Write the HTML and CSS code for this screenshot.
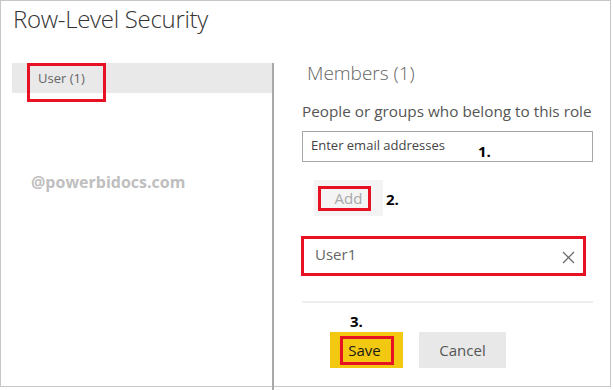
FILE: index.html
```html
<!DOCTYPE html>
<html>
<head>
<meta charset="utf-8">
<link rel="stylesheet" href="styles.css">
</head>
<body>
<div class="frame">
  <h1 class="title">Row-Level Security</h1>
  <div class="main">
    <div class="left">
      <div class="role-row">
        <span class="role-name">User (1)</span>
        <span class="mark mark-role"></span>
      </div>
      <div class="watermark">@powerbidocs.com</div>
    </div>
    <div class="divider"></div>
    <div class="right">
      <div class="members">Members (1)</div>
      <div class="label">People or groups who belong to this role</div>
      <div class="input">
        <span class="placeholder">Enter email addresses</span>
        <span class="step step-1">1.</span>
      </div>
      <div class="add-row">
        <div class="btn-add">Add<span class="mark mark-add"></span></div>
        <span class="step step-2">2.</span>
      </div>
      <div class="member-item">
        <span class="member-name">User1</span>
        <svg class="close" width="13" height="13" viewBox="0 0 13 13"><path d="M1 1L12 12M12 1L1 12" stroke="#6b6b6b" stroke-width="1.3" fill="none"/></svg>
      </div>
      <div class="sep"></div>
      <div class="actions">
        <span class="step step-3">3.</span>
        <div class="btn btn-save">Save<span class="mark mark-save"></span></div>
        <div class="btn btn-cancel">Cancel</div>
      </div>
    </div>
  </div>
</div>
</body>
</html>
```

FILE: styles.css
```css
html, body {
  margin: 0;
  padding: 0;
  background: #ffffff;
}
body {
  font-family: "Open Sans", "Noto Sans", sans-serif;
  width: 613px;
  height: 390px;
  overflow: hidden;
}
.frame {
  box-sizing: border-box;
  width: 611px;
  height: 387px;
  border: 1px solid #c6c6c6;
  display: flex;
  flex-direction: column;
}
.title {
  margin: 0;
  padding: 0 0 0 12px;
  height: 62px;
  font-size: 24px;
  line-height: 36px;
  font-weight: 300;
  color: #333333;
  letter-spacing: -0.3px;
}
.main {
  flex: 1;
  display: grid;
  grid-template-columns: 260px 2px 1fr;
  padding-left: 11px;
}
.left {
  display: flex;
  flex-direction: column;
}
.role-row {
  position: relative;
  height: 30px;
  background: #e9e9e9;
  display: flex;
  align-items: center;
  padding-left: 26px;
}
.role-name {
  font-size: 13px;
  color: #666666;
}
.mark {
  position: absolute;
  border: 3px solid #e81123;
  box-sizing: border-box;
}
.mark-role {
  left: 15px;
  top: 0;
  width: 79px;
  height: 39px;
}
.watermark {
  margin-top: 78px;
  padding-left: 19px;
  font-size: 16px;
  font-weight: 700;
  color: #bfbfbf;
  letter-spacing: 0;
}
.divider {
  background: #a9a9a9;
  margin-bottom: -4px;
}
.right {
  padding: 0 17px 0 28px;
  display: flex;
  flex-direction: column;
}
.members {
  font-size: 19px;
  font-weight: 300;
  color: #666666;
  line-height: 24px;
  padding-left: 5px;
  margin-top: -2px;
}
.label {
  margin-top: 16px;
  font-size: 15.3px;
  color: #555555;
  line-height: 20px;
  letter-spacing: 0;
  white-space: nowrap;
}
.input {
  position: relative;
  margin-top: 10px;
  height: 31px;
  box-sizing: border-box;
  border: 1px solid #a6a6a6;
  display: flex;
  align-items: center;
  padding-left: 8px;
}
.placeholder {
  font-size: 13px;
  color: #444444;
  margin-top: -4px;
}
.step {
  position: absolute;
  font-size: 15px;
  font-weight: 700;
  color: #000000;
  line-height: 18px;
}
.step-1 {
  left: 175px;
  top: 10px;
}
.add-row {
  position: relative;
  margin-top: 18px;
  padding-left: 12px;
  display: flex;
}
.btn-add {
  position: relative;
  width: 69px;
  height: 36px;
  background: #f4f4f4;
  color: #a8a8a8;
  font-size: 15px;
  display: flex;
  align-items: center;
  justify-content: center;
  box-sizing: border-box;
}
.mark-add {
  left: 4px;
  top: 6px;
  width: 53px;
  height: 25px;
}
.step-2 {
  left: 84px;
  top: 10px;
}
.member-item {
  margin-top: 20px;
  margin-left: -1px;
  width: 285px;
  height: 40px;
  box-sizing: border-box;
  border: 3px solid #e81123;
  display: flex;
  align-items: center;
  justify-content: space-between;
  padding: 0 8px 0 11px;
}
.member-name {
  font-size: 15px;
  color: #666666;
  margin-top: -5px;
}
.close {
  margin-top: 2px;
}
.sep {
  margin-top: 25px;
  height: 2px;
  background: #eeeeee;
}
.actions {
  position: relative;
  margin-top: 29px;
  padding-left: 28px;
  display: flex;
  gap: 16px;
}
.step-3 {
  left: 48px;
  top: -20px;
}
.btn {
  position: relative;
  height: 36px;
  display: flex;
  align-items: center;
  justify-content: center;
  font-size: 15px;
}
.btn-save {
  width: 73px;
  background: #f2c811;
  color: #1a1a1a;
  padding-right: 4px;
  box-sizing: border-box;
}
.mark-save {
  left: 10px;
  top: 4px;
  width: 54px;
  height: 29px;
}
.btn-cancel {
  width: 87px;
  background: #e8e8e8;
  color: #555555;
}
```
